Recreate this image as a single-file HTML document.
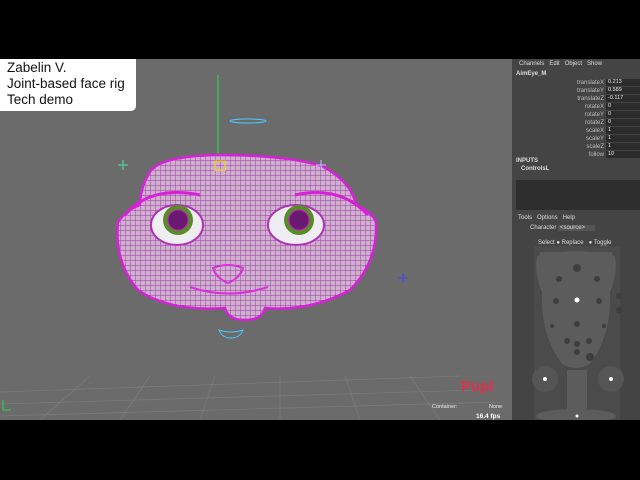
<!DOCTYPE html>
<html><head><style>
body{margin:0;width:640px;height:480px;background:#000;overflow:hidden;position:relative;font-family:"Liberation Sans",sans-serif}
.vp{position:absolute;left:0;top:59px;width:512px;height:361px;background:#6b6b6b;overflow:hidden}
.lbl{position:absolute;left:0;top:59px;width:136px;height:52px;background:#fff;border-bottom-right-radius:5px;font-size:13.5px;line-height:16px;color:#111;padding:1px 0 0 7px;box-sizing:border-box}
.rp{position:absolute;left:512px;top:59px;width:128px;height:361px;background:#444;font-size:6px;color:#ddd}
.t{position:absolute;white-space:nowrap}
.f{position:absolute;left:94px;width:34px;height:7px;background:#2b2b2b;color:#eee;font-size:5.5px;line-height:7px;padding-left:2px;box-sizing:border-box}
</style></head><body>
<div class="vp">
<svg width="512" height="361" viewBox="0 59 512 361">
<defs>
<pattern id="g" width="5" height="5" patternUnits="userSpaceOnUse"><rect width="5" height="5" fill="#cfb0cf"/><path d="M0 0H5M0 0V5" stroke="#9a3aa0" stroke-width="0.9"/></pattern>
</defs>
<g stroke="#7a7a7a" stroke-width="0.8" fill="none">
<path d="M0 392L460 376M0 404L480 390M0 416L500 402M40 420L90 376M120 420L150 376M200 420L215 376M280 420L280 376M360 420L345 376M440 420L410 376"/>
</g>
<line x1="218" y1="75" x2="218" y2="160" stroke="#2cd84a" stroke-width="1.2"/>
<ellipse cx="248" cy="121" rx="18" ry="2" fill="none" stroke="#4ac8ff" stroke-width="1"/>
<path d="M150 172Q160 156 218 155Q285 155 322 166Q352 182 356 205Q372 212 376 222Q378 262 350 290Q310 312 265 308Q262 320 245 320Q228 320 225 308Q170 312 138 290Q114 262 118 222Q126 210 140 205Q140 188 150 172Z" fill="url(#g)" stroke="#d820d8" stroke-width="2.5"/>
<path d="M125 215Q150 185 200 195M295 195Q340 185 368 215" stroke="#d820d8" stroke-width="3" fill="none"/>
<ellipse cx="177" cy="225" rx="26" ry="20" fill="#eeeef2" stroke="#b030b8" stroke-width="2"/>
<ellipse cx="296" cy="225" rx="28" ry="20" fill="#eeeef2" stroke="#b030b8" stroke-width="2"/>
<circle cx="178" cy="220" r="15" fill="#5a8a2a"/><circle cx="178" cy="220" r="10" fill="#6a1870" stroke="#c020c0"/>
<circle cx="299" cy="220" r="15" fill="#5a8a2a"/><circle cx="299" cy="220" r="10" fill="#6a1870" stroke="#c020c0"/>
<path d="M213 268Q228 262 243 268Q240 278 228 283Q216 278 213 268Z" fill="none" stroke="#d830d8" stroke-width="2"/>
<path d="M190 287Q228 300 268 287" stroke="#d830d8" stroke-width="2" fill="none"/>
<path d="M219 330Q231 334 243 330Q240 338 231 338Q222 338 219 330Z" fill="none" stroke="#4ac8ff" stroke-width="1"/>
<rect x="215" y="161" width="10" height="9" fill="none" stroke="#f0d020" stroke-width="1.2"/>
<path d="M118 165h10M123 160v10" stroke="#4ae0a0"/>
<path d="M316 165h10M321 160v10" stroke="#c0c0ff"/>
<path d="M398 278h10M403 273v10" stroke="#4040ff"/>
<text x="461" y="391" fill="#e0304a" font-size="15" font-weight="bold" font-family="Liberation Sans">Pupl</text>
<text x="432" y="408" fill="#eee" font-size="5.5" font-family="Liberation Sans">Container:</text>
<text x="489" y="408" fill="#eee" font-size="5.5" font-family="Liberation Sans">None</text>
<text x="476" y="418" fill="#fff" font-size="6.5" font-weight="bold" font-family="Liberation Sans">16.4 fps</text>
<path d="M3 400v10h8" stroke="#2cd84a" fill="none"/>
</svg>
</div>
<div class="lbl">Zabelin V.<br>Joint-based face rig<br>Tech demo</div>
<div class="rp">
<div class="t" style="left:7px;top:2px">Channels &nbsp; Edit &nbsp; Object &nbsp; Show</div>
<div class="t" style="left:4px;top:12px;font-weight:bold">AimEye_M</div>
<div class="t" style="right:36px;top:20px;text-align:right;line-height:8px;color:#bbb">translateX<br>translateY<br>translateZ<br>rotateX<br>rotateY<br>rotateZ<br>scaleX<br>scaleY<br>scaleZ<br>follow</div>
<div class="f" style="top:20px">0.213</div><div class="f" style="top:28px">0.589</div><div class="f" style="top:36px">-0.117</div><div class="f" style="top:44px">0</div><div class="f" style="top:52px">0</div><div class="f" style="top:60px">0</div><div class="f" style="top:68px">1</div><div class="f" style="top:76px">1</div><div class="f" style="top:84px">1</div><div class="f" style="top:92px">10</div>
<div class="t" style="left:4px;top:99px;font-weight:bold">INPUTS</div>
<div class="t" style="left:9px;top:107px;font-weight:bold">ControlsL</div>
<div style="position:absolute;left:4px;top:121px;width:124px;height:30px;background:#2e2e2e"></div>
<div class="t" style="left:6px;top:156px">Tools &nbsp; Options &nbsp; Help</div>
<div class="t" style="left:18px;top:166px">Character <span style="background:#555;padding:0 10px 0 2px">&lt;source&gt;</span></div>
<div class="t" style="left:26px;top:181px">Select ● Replace &nbsp; ● Toggle</div>
<svg style="position:absolute;left:0;top:185px" width="128" height="176">
<rect x="22" y="2" width="86" height="174" fill="#4b4b4b"/>
<path d="M25 12Q22 30 30 48Q28 90 50 120Q64 128 78 120Q100 90 98 48Q106 30 103 12Q64 2 25 12Z" fill="#5c5c5c"/>
<path d="M28 8h20l-20 15zM100 8H80l20 15z" fill="#5c5c5c"/>
<g fill="#3e3e3e">
<circle cx="65" cy="24" r="4"/><circle cx="47" cy="35" r="3"/><circle cx="85" cy="35" r="3"/><circle cx="44" cy="57" r="3"/><circle cx="87" cy="57" r="3"/><circle cx="107" cy="52" r="3"/><circle cx="107" cy="66" r="3"/><circle cx="55" cy="97" r="3"/><circle cx="77" cy="97" r="3"/><circle cx="65" cy="100" r="3"/><circle cx="78" cy="113" r="4"/><circle cx="65" cy="80" r="3"/><circle cx="65" cy="108" r="3"/><circle cx="40" cy="82" r="2"/><circle cx="92" cy="82" r="2"/>
</g>
<path d="M55 126h20v40Q65 172 55 166z" fill="#5c5c5c"/>
<circle cx="65" cy="56" r="2.5" fill="#fff"/>
<g fill="#555"><circle cx="33" cy="135" r="13"/><circle cx="99" cy="135" r="13"/></g>
<circle cx="33" cy="135" r="2" fill="#fff"/><circle cx="99" cy="135" r="2" fill="#fff"/>
<ellipse cx="64" cy="172" rx="40" ry="7" fill="#5c5c5c"/>
<circle cx="65" cy="172" r="1.5" fill="#fff"/>
</svg>
</div>
</body></html>
